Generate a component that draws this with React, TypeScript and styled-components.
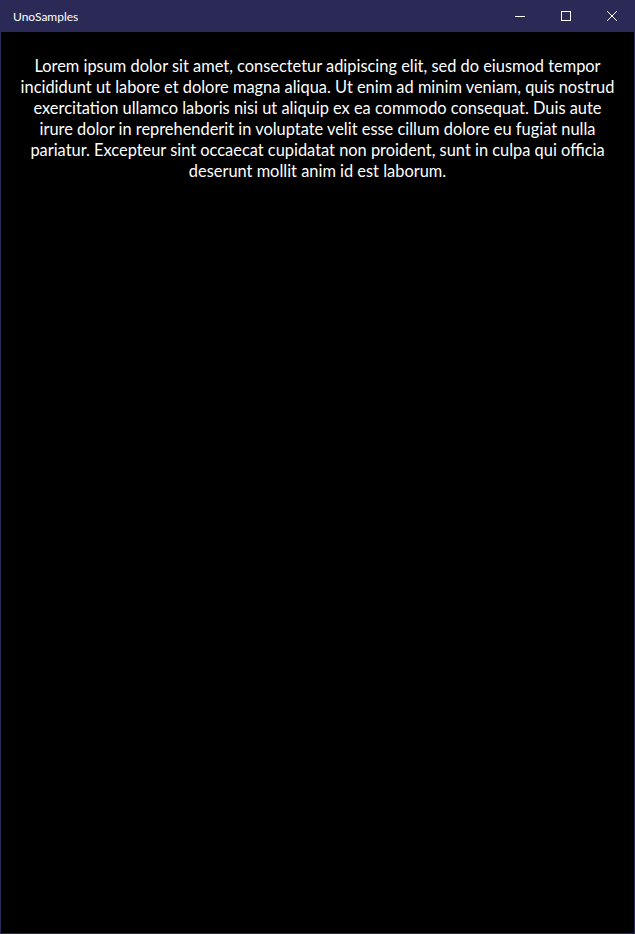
import styled, { createGlobalStyle } from 'styled-components';

const GlobalStyle = createGlobalStyle`
  html, body {
    margin: 0;
    padding: 0;
    background: #000;
  }
`;

const Window = styled.div`
  width: 635px;
  height: 934px;
  box-sizing: border-box;
  display: flex;
  flex-direction: column;
  background: #000;
  border: 1px solid #2b2a56;
  border-top: none;
  font-family: "Segoe UI", Lato, "Open Sans", sans-serif;
`;

const TitleBar = styled.div`
  height: 32px;
  flex-shrink: 0;
  display: flex;
  align-items: center;
  background: #2b2a56;
  margin: 0 -1px;
`;

const Title = styled.span`
  flex: 1;
  padding-left: 13px;
  font-size: 12px;
  color: #fff;
`;

const CaptionButton = styled.button`
  width: 46px;
  height: 32px;
  border: none;
  padding: 0;
  background: transparent;
  display: flex;
  align-items: center;
  justify-content: center;
  color: #fff;
`;

const Content = styled.main`
  flex: 1;
  padding: 23px 18px 0;
`;

const Paragraph = styled.p`
  margin: 0;
  text-align: center;
  color: #fff;
  font-size: 16.4px;
  line-height: 21px;
`;

export default function App() {
  return (
    <>
      <GlobalStyle />
      <Window>
        <TitleBar>
          <Title>UnoSamples</Title>
          <CaptionButton aria-label="Minimize">
            <svg width="10" height="10" viewBox="0 0 10 10">
              <path d="M0 5.5h10" stroke="currentColor" strokeWidth="1" />
            </svg>
          </CaptionButton>
          <CaptionButton aria-label="Maximize">
            <svg width="10" height="10" viewBox="0 0 10 10">
              <rect x="0.5" y="0.5" width="9" height="9" fill="none" stroke="currentColor" strokeWidth="1" />
            </svg>
          </CaptionButton>
          <CaptionButton aria-label="Close">
            <svg width="10" height="10" viewBox="0 0 10 10">
              <path d="M0 0L10 10M10 0L0 10" stroke="currentColor" strokeWidth="1" />
            </svg>
          </CaptionButton>
        </TitleBar>
        <Content>
          <Paragraph>
            Lorem ipsum dolor sit amet, consectetur adipiscing elit, sed do eiusmod tempor
            incididunt ut labore et dolore magna aliqua. Ut enim ad minim veniam, quis nostrud
            exercitation ullamco laboris nisi ut aliquip ex ea commodo consequat. Duis aute
            irure dolor in reprehenderit in voluptate velit esse cillum dolore eu fugiat nulla
            pariatur. Excepteur sint occaecat cupidatat non proident, sunt in culpa qui officia
            deserunt mollit anim id est laborum.
          </Paragraph>
        </Content>
      </Window>
    </>
  );
}
